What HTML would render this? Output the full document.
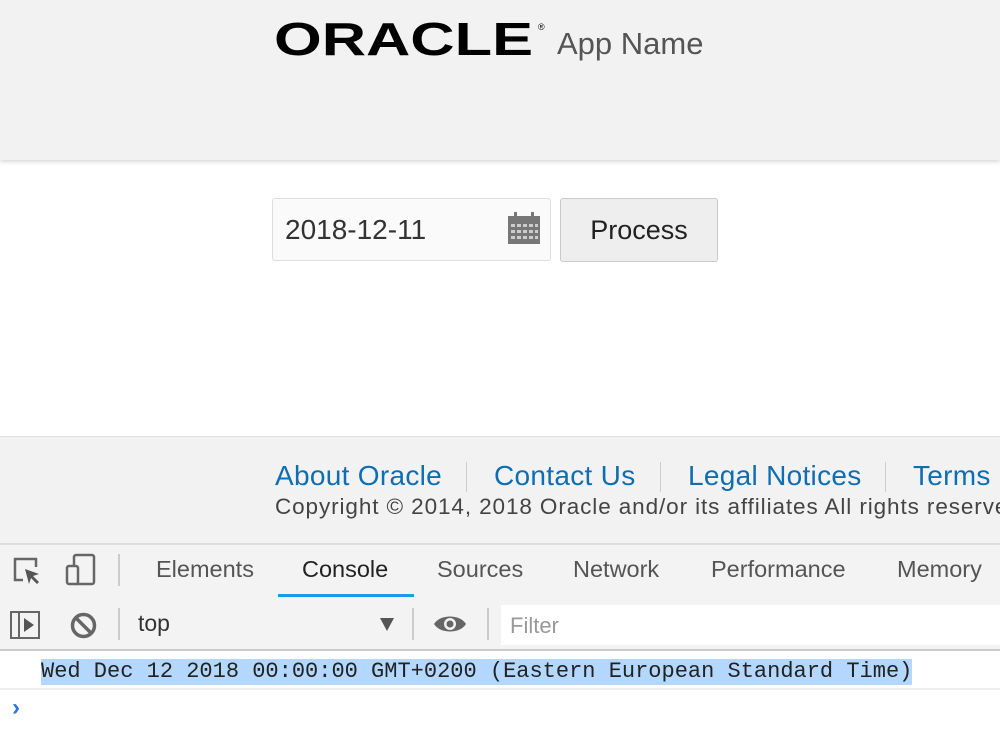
<!DOCTYPE html>
<html><head><style>
body{margin:0;width:1000px;height:736px;overflow:hidden;font-family:"Liberation Sans",sans-serif;background:#fff;position:relative}
.abs{position:absolute}
.hdr{left:0;top:0;width:1000px;height:160px;background:#f2f2f2;box-shadow:0 2px 4px rgba(0,0,0,.15)}
.app{left:557px;top:26px;font-size:31px;color:#555}
.inp{left:272px;top:198px;width:279px;height:63px;border:1px solid #dedede;border-radius:3px;background:#fafafa;box-sizing:border-box}
.btn{left:560px;top:198px;width:158px;height:64px;border:1px solid #c9c9c9;border-radius:3px;background:#eeeeee;box-sizing:border-box;font-size:27px;color:#222;text-align:center;line-height:62px}
.ftr{left:0;top:436px;width:1000px;height:108px;background:#f2f2f2;border-top:1px solid #e0e0e0}
.lnk{top:460px;font-size:28px;letter-spacing:0.3px;color:#0c6eb3;white-space:nowrap}
.sep{top:462px;width:1px;height:30px;background:#ccc}
.dt{left:0;top:543px;width:1000px;height:54px;background:#f3f3f3;border-top:2px solid #ddd;border-bottom:2px solid #ccc}
.tab{top:556px;font-size:23.5px;color:#555}
.bar2{left:0;top:599px;width:1000px;height:50px;background:#f3f3f3;border-bottom:2px solid #ccc}
.log{left:41px;top:659px;height:26px;background:#b3d7fe;font-family:"Liberation Mono",monospace;font-size:22px;color:#222;line-height:26px;white-space:nowrap}
</style></head><body>
<div class="abs hdr"></div>
<svg class="abs" style="left:274px;top:20px" width="275" height="40" viewBox="0 0 275 40"><text x="0" y="35" font-family="Liberation Sans" font-weight="bold" font-size="46" textLength="259" lengthAdjust="spacingAndGlyphs" fill="#000">ORACLE</text><text x="264" y="10" font-size="9" fill="#000">®</text></svg>
<div class="abs app">App Name</div>
<div class="abs inp"><span class="abs" style="left:12px;top:15px;font-size:28px;color:#333">2018-12-11</span>
<svg class="abs" style="left:235px;top:13px" width="32" height="32" viewBox="0 0 32 32"><rect x="0" y="4" width="32" height="28" fill="#777"/><rect x="6" y="0" width="3" height="7" fill="#777"/><rect x="23" y="0" width="3" height="7" fill="#777"/><g fill="#ccc"><rect x="3" y="12" width="4" height="3"/><rect x="9" y="12" width="4" height="3"/><rect x="15" y="12" width="4" height="3"/><rect x="21" y="12" width="4" height="3"/><rect x="27" y="12" width="3" height="3"/><rect x="3" y="18" width="4" height="3"/><rect x="9" y="18" width="4" height="3"/><rect x="15" y="18" width="4" height="3"/><rect x="21" y="18" width="4" height="3"/><rect x="27" y="18" width="3" height="3"/><rect x="3" y="24" width="4" height="3"/><rect x="9" y="24" width="4" height="3"/><rect x="15" y="24" width="4" height="3"/><rect x="21" y="24" width="4" height="3"/><rect x="27" y="24" width="3" height="3"/></g></svg></div>
<div class="abs btn">Process</div>
<div class="abs ftr"></div>
<div class="abs lnk" style="left:275px">About Oracle</div>
<div class="abs sep" style="left:466px"></div>
<div class="abs lnk" style="left:494px">Contact Us</div>
<div class="abs sep" style="left:660px"></div>
<div class="abs lnk" style="left:688px">Legal Notices</div>
<div class="abs sep" style="left:885px"></div>
<div class="abs lnk" style="left:913px">Terms</div>
<div class="abs" style="left:275px;top:494px;font-size:22.5px;letter-spacing:0.9px;color:#444;white-space:nowrap">Copyright © 2014, 2018 Oracle and/or its affiliates All rights reserved</div>
<div class="abs dt"></div>
<svg class="abs" style="left:13px;top:557px" width="30" height="30" viewBox="0 0 30 30"><path d="M10 23H2V2h21v8" fill="none" stroke="#666" stroke-width="2.5"/><path d="M12 12l14 5-6 2 6 6-2 2-6-6-2 6z" fill="#555"/></svg>
<svg class="abs" style="left:64px;top:553px" width="34" height="34" viewBox="0 0 34 34"><rect x="10" y="2" width="20" height="29" rx="2" fill="none" stroke="#666" stroke-width="2.5"/><rect x="3" y="13" width="11" height="18" rx="2" fill="#f3f3f3" stroke="#666" stroke-width="2.5"/></svg>
<div class="abs" style="left:118px;top:554px;width:2px;height:32px;background:#ccc"></div>
<div class="abs tab" style="left:156px">Elements</div>
<div class="abs tab" style="left:302px;color:#222">Console</div>
<div class="abs" style="left:278px;top:594px;width:136px;height:3px;background:#1a9de8"></div>
<div class="abs tab" style="left:437px">Sources</div>
<div class="abs tab" style="left:573px">Network</div>
<div class="abs tab" style="left:711px">Performance</div>
<div class="abs tab" style="left:897px">Memory</div>
<div class="abs bar2"></div>
<svg class="abs" style="left:10px;top:611px" width="30" height="28" viewBox="0 0 30 28"><rect x="1" y="1" width="28" height="26" fill="none" stroke="#666" stroke-width="2"/><line x1="9" y1="1" x2="9" y2="27" stroke="#666" stroke-width="2"/><path d="M14 7l10 7-10 7z" fill="#555"/></svg>
<svg class="abs" style="left:70px;top:612px" width="27" height="27" viewBox="0 0 27 27"><circle cx="13.5" cy="13.5" r="11" fill="none" stroke="#666" stroke-width="3.5"/><line x1="6" y1="6" x2="21" y2="21" stroke="#666" stroke-width="3.5"/></svg>
<div class="abs" style="left:118px;top:608px;width:2px;height:32px;background:#ccc"></div>
<div class="abs" style="left:138px;top:610px;font-size:23px;color:#333">top</div>
<div class="abs" style="left:380px;top:618px;width:0;height:0;border-left:7px solid transparent;border-right:7px solid transparent;border-top:13px solid #555"></div>
<div class="abs" style="left:412px;top:608px;width:2px;height:32px;background:#ccc"></div>
<svg class="abs" style="left:433px;top:613px" width="34" height="22" viewBox="0 0 34 22"><path d="M1 11C7 1 27 1 33 11C27 21 7 21 1 11z" fill="#666"/><circle cx="17" cy="11" r="6" fill="#f3f3f3"/><circle cx="17" cy="11" r="3.5" fill="#666"/></svg>
<div class="abs" style="left:487px;top:608px;width:2px;height:32px;background:#ccc"></div>
<div class="abs" style="left:501px;top:605px;width:499px;height:40px;background:#fff"></div>
<div class="abs" style="left:510px;top:613px;font-size:22px;color:#999">Filter</div>
<div class="abs log">Wed Dec 12 2018 00:00:00 GMT+0200 (Eastern European Standard Time)</div>
<div class="abs" style="left:0;top:688px;width:1000px;height:2px;background:#eee"></div>
<div class="abs" style="left:12px;top:694px;font-size:24px;color:#2f74e8;font-weight:bold">›</div>
</body></html>
